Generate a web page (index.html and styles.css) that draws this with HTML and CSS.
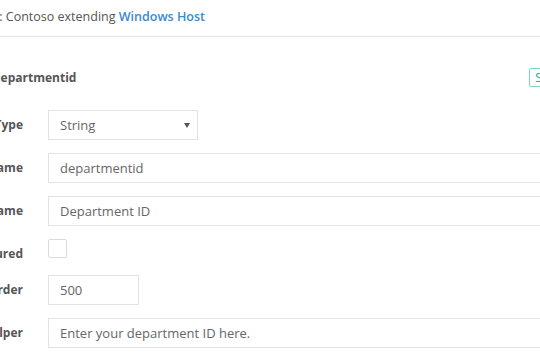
FILE: index.html
```html
<!DOCTYPE html>
<html lang="en">
<head>
    <meta charset="UTF-8">
    <meta name="viewport" content="width=device-width, initial-scale=1.0">
    <title>Edit Field - Contoso</title>
    <link rel="stylesheet" href="styles.css">
</head>
<body>
    <div class="page">
        <header class="page-header">
            <span class="crumb">Extension: Contoso extending&nbsp;<a href="#">Windows Host</a></span>
        </header>

        <div class="field-title">
            <h2>departmentid</h2>
            <span class="badge">String</span>
        </div>

        <form class="field-form">
            <div class="form-row">
                <label>Type</label>
                <div class="select-box">
                    <span>String</span>
                    <span class="caret"></span>
                </div>
            </div>
            <div class="form-row">
                <label>Name</label>
                <input type="text" class="text-input" value="departmentid">
            </div>
            <div class="form-row">
                <label>Display Name</label>
                <input type="text" class="text-input" value="Department ID">
            </div>
            <div class="form-row">
                <label>Featured</label>
                <span class="checkbox"></span>
            </div>
            <div class="form-row">
                <label>Order</label>
                <input type="text" class="text-input short" value="500">
            </div>
            <div class="form-row">
                <label>Helper</label>
                <input type="text" class="text-input" value="Enter your department ID here.">
            </div>
        </form>
    </div>
</body>
</html>
```

FILE: styles.css
```css
body {
    margin: 0;
    padding: 0;
    background-color: #fff;
    font-family: "Open Sans", Arial, sans-serif;
    color: #555;
    overflow: hidden;
}

/* the view is cropped on the left, so the page starts off-screen */
.page {
    margin-left: -100px;
    width: 760px;
}

.page-header {
    height: 36px;
    border-bottom: 1px solid #e6e6e6;
}

.crumb {
    display: flex;
    justify-content: flex-end;
    width: 305px;
    font-size: 12.5px;
    line-height: 33px;
    white-space: nowrap;
}

.crumb a {
    color: #3a8ad0;
    text-decoration: none;
    font-weight: 600;
}

.field-title {
    display: flex;
    justify-content: space-between;
    align-items: center;
    margin-top: 31px;
    padding-left: 93px;
    width: 581px;
    height: 19px;
}

.field-title h2 {
    margin: 0;
    font-size: 12px;
    font-weight: 700;
    color: #555;
}

.badge {
    border: 1px solid #7bd6bf;
    border-radius: 2px;
    color: #22b083;
    font-size: 12px;
    line-height: 17px;
    padding: 0 5px;
}

.field-form {
    margin-top: 23px;
}

.form-row {
    display: flex;
    align-items: flex-start;
    margin-bottom: 13px;
}

.form-row label {
    width: 123px;
    flex-shrink: 0;
    text-align: right;
    font-size: 12px;
    font-weight: 700;
    line-height: 16px;
    padding-top: 7px;
    margin-right: 25px;
    white-space: nowrap;
}

.select-box {
    box-sizing: border-box;
    width: 150px;
    height: 30px;
    border: 1px solid #e3e3e3;
    display: flex;
    align-items: center;
    justify-content: space-between;
    padding: 0 7px 0 11px;
    font-size: 13px;
    color: #666;
}

.caret {
    width: 0;
    height: 0;
    border-left: 3px solid transparent;
    border-right: 3px solid transparent;
    border-top: 5px solid #555;
}

.text-input {
    box-sizing: border-box;
    width: 600px;
    height: 30px;
    border: 1px solid #e3e3e3;
    padding: 0 11px;
    font-family: "Open Sans", Arial, sans-serif;
    font-size: 13px;
    color: #666;
    outline: none;
}

.text-input.short {
    width: 91px;
}

.checkbox {
    box-sizing: border-box;
    width: 19px;
    height: 19px;
    border: 1px solid #dcdad6;
    border-radius: 2px;
    background-color: #fff;
}
```
